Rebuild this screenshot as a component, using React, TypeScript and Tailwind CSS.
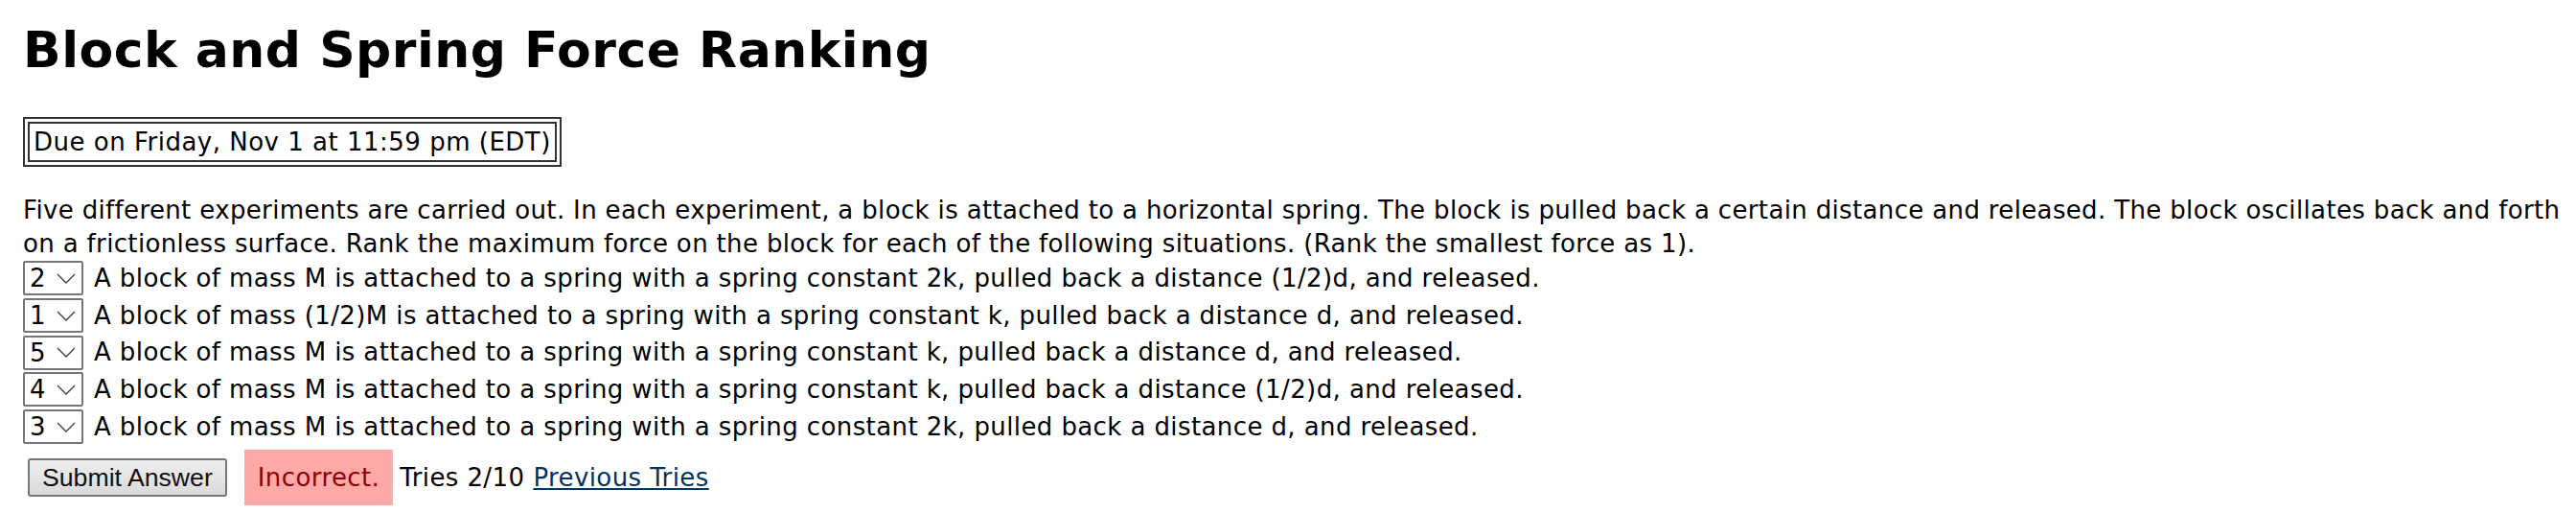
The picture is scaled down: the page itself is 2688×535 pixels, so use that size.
import React from "react";

const rows: { rank: string; text: string }[] = [
  { rank: "2", text: "A block of mass M is attached to a spring with a spring constant 2k, pulled back a distance (1/2)d, and released." },
  { rank: "1", text: "A block of mass (1/2)M is attached to a spring with a spring constant k, pulled back a distance d, and released." },
  { rank: "5", text: "A block of mass M is attached to a spring with a spring constant k, pulled back a distance d, and released." },
  { rank: "4", text: "A block of mass M is attached to a spring with a spring constant k, pulled back a distance (1/2)d, and released." },
  { rank: "3", text: "A block of mass M is attached to a spring with a spring constant 2k, pulled back a distance d, and released." },
];

function Chevron() {
  return (
    <svg width="20" height="11" viewBox="0 0 20 11" className="shrink-0">
      <path d="M1 1 L10 10 L19 1" fill="none" stroke="#3b3b3b" strokeWidth="1.3" />
    </svg>
  );
}

export default function App() {
  return (
    <div
      className="bg-white text-black min-h-[535px] pl-[24px] pr-[4px] pt-[22px] tracking-[0.4px]"
      style={{ fontFamily: '"DejaVu Sans", Verdana, sans-serif' }}
    >
      <h1 className="text-[52px] leading-[60px] font-bold tracking-[0.5px]">Block and Spring Force Ranking</h1>

      <div className="mt-[40px] inline-block border-[7px] border-double border-[#333333] px-[4px] py-[3px]">
        <div className="text-[26px] leading-[32px] tracking-[0.5px]">Due on Friday, Nov 1 at 11:59 pm (EDT)</div>
      </div>

      <p className="mt-[28px] text-[26px] leading-[34.5px] tracking-[0.35px]">
        Five different experiments are carried out. In each experiment, a block is attached to a horizontal spring. The
        block is pulled back a certain distance and released. The block oscillates back and forth on a frictionless
        surface. Rank the maximum force on the block for each of the following situations. (Rank the smallest force as 1).
      </p>

      <div className="flex flex-col">
        {rows.map((r, i) => (
          <div key={i} className="flex items-center h-[38.7px] text-[26px]">
            <div className="flex items-center justify-between w-[63px] h-[36px] border-2 border-[#767676] rounded-[2px] bg-white pl-[5px] pr-[6px]">
              <span className="leading-[30px]">{r.rank}</span>
              <Chevron />
            </div>
            <span className="ml-[11px] whitespace-nowrap">{r.text}</span>
          </div>
        ))}
      </div>

      <div className="mt-[5px] flex items-center text-[26px]">
        <button
          className="ml-[5px] h-[40px] px-[13px] border-2 border-[#767676] rounded-[3px] bg-gradient-to-b from-[#efefef] to-[#dadada] text-[#111] text-[26.67px] leading-[30px] tracking-normal"
          style={{ fontFamily: '"Liberation Sans", Arial, sans-serif' }}
        >
          Submit Answer
        </button>
        <span className="ml-[18px] bg-[#ffa8a8] text-[#8b0000] px-[14px] py-[13px] leading-[32px]">Incorrect.</span>
        <span className="ml-[7px]">Tries 2/10</span>
        <a href="#" className="ml-[9px] text-[#003366] underline">
          Previous Tries
        </a>
      </div>
    </div>
  );
}
